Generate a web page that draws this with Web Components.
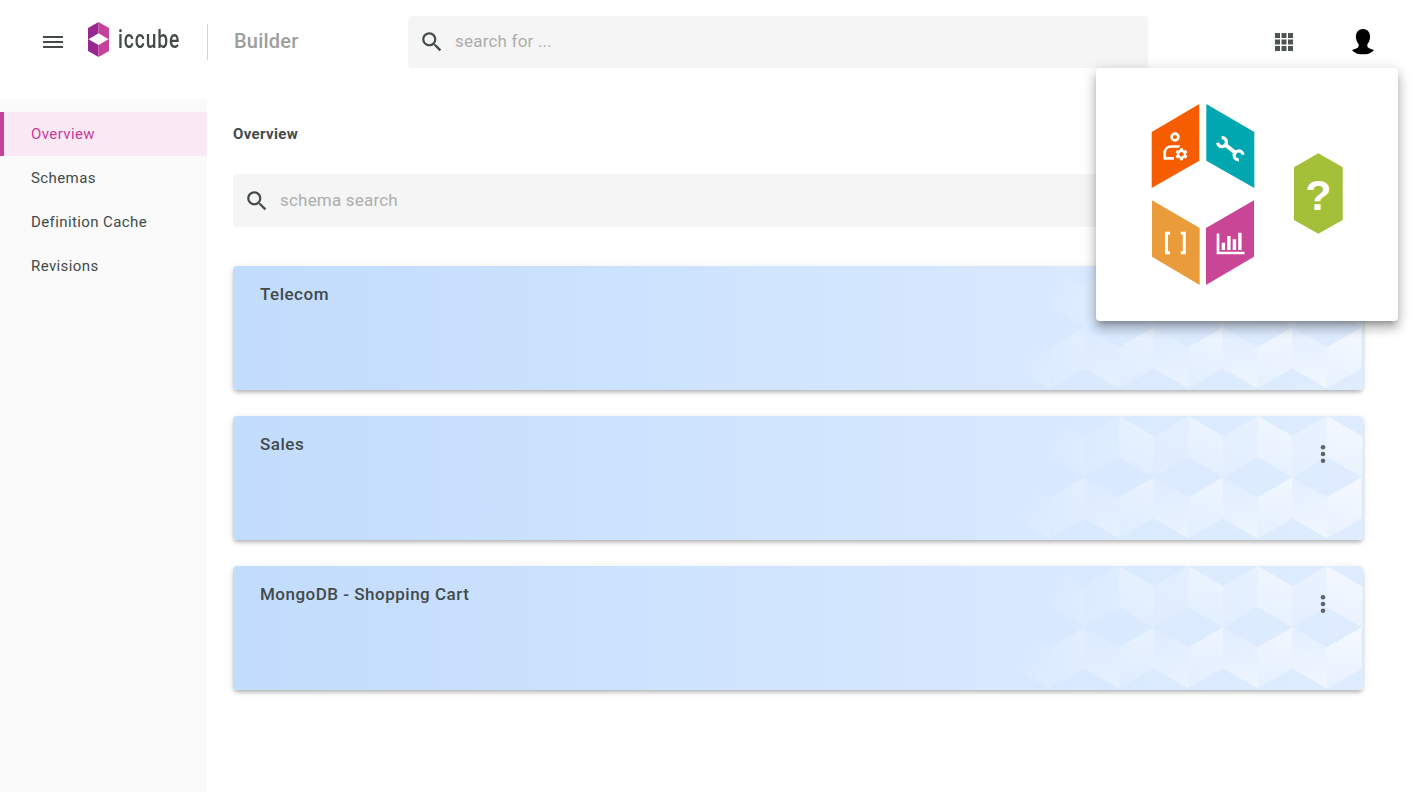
<!DOCTYPE html>
<html lang="en">
<head>
<meta charset="utf-8">
<title>icCube Builder</title>
<style>
    html, body { margin: 0; height: 100%; background: #fff; font-family: Roboto, sans-serif; overflow: hidden; }
</style>
</head>
<body>
<ic-app>
    <ic-header slot="header"></ic-header>
    <ic-sidebar slot="sidebar">
        <ic-nav-item active>Overview</ic-nav-item>
        <ic-nav-item>Schemas</ic-nav-item>
        <ic-nav-item>Definition Cache</ic-nav-item>
        <ic-nav-item>Revisions</ic-nav-item>
    </ic-sidebar>
    <ic-schema-card>Telecom</ic-schema-card>
    <ic-schema-card>Sales</ic-schema-card>
    <ic-schema-card>MongoDB - Shopping Cart</ic-schema-card>
    <ic-apps-menu slot="menu"></ic-apps-menu>
</ic-app>

<script>
const SEARCH_ICON = `<svg width="26" height="26" viewBox="0 0 24 24" fill="#424a4a"><path d="M15.5 14h-.79l-.28-.27C15.41 12.59 16 11.11 16 9.5 16 5.91 13.09 3 9.5 3S3 5.91 3 9.5 5.91 16 9.5 16c1.61 0 3.09-.59 4.23-1.57l.27.28v.79l5 4.99L20.49 19l-4.99-5zm-6 0C7.01 14 5 11.99 5 9.5S7.01 5 9.5 5 14 7.01 14 9.5 11.99 14 9.5 14z"/></svg>`

const GEAR = "M19.14 12.94c.04-.3.06-.61.06-.94 0-.32-.02-.64-.07-.94l2.03-1.58c.18-.14.23-.41.12-.61l-1.92-3.32c-.12-.22-.37-.29-.59-.22l-2.39.96c-.5-.38-1.03-.7-1.62-.94l-.36-2.54c-.04-.24-.24-.41-.48-.41h-3.84c-.24 0-.43.17-.47.41l-.36 2.54c-.59.24-1.13.57-1.62.94l-2.39-.96c-.22-.08-.47 0-.59.22L2.74 8.87c-.12.21-.08.47.12.61l2.03 1.58c-.05.3-.09.63-.09.94s.02.64.07.94l-2.03 1.58c-.18.14-.23.41-.12.61l1.92 3.32c.12.22.37.29.59.22l2.39-.96c.5.38 1.03.7 1.62.94l.36 2.54c.05.24.24.41.48.41h3.84c.24 0 .44-.17.47-.41l.36-2.54c.59-.24 1.13-.56 1.62-.94l2.39.96c.22.08.47 0 .59-.22l1.92-3.32c.12-.22.07-.47-.12-.61l-2.01-1.58zM12 15.6c-1.98 0-3.6-1.62-3.6-3.6s1.62-3.6 3.6-3.6 3.6 1.62 3.6 3.6-1.62 3.6-3.6 3.6z"

class IcApp extends HTMLElement {
    constructor() {
        super()
        this.attachShadow({mode: "open"}).innerHTML = `
            <style>
            :host { display: block; position: relative; width: 1413px; height: 792px; overflow: hidden; }
            .body { display: flex; height: 693px; margin-top: 15px; }
            main { flex: 1; padding: 0 50px 0 26px; min-width: 0; }
            h1 { margin: 0 0 5px; height: 70px; display: flex; align-items: center; font-size: 15px; font-weight: 700; letter-spacing: .35px; color: #424a4a; }
            .cards { display: flex; flex-direction: column; gap: 26px; margin-top: 39px; }
            </style>
            <slot name="header"></slot>
            <div class="body">
                <slot name="sidebar"></slot>
                <main>
                    <h1>Overview</h1>
                    <ic-search-field placeholder="schema search" height="53"></ic-search-field>
                    <div class="cards"><slot></slot></div>
                </main>
            </div>
            <slot name="menu"></slot>
        `
    }
}

class IcSearchField extends HTMLElement {
    constructor() {
        super()
        const height = this.getAttribute('height') || 52
        this.attachShadow({mode: "open"}).innerHTML = `
            <style>
            :host { display: flex; align-items: center; box-sizing: border-box; height: ${height}px; padding-left: 11px; gap: 10px; background: #f5f5f5; border-radius: 4px; }
            svg { flex: none; }
            span { font-size: 17px; letter-spacing: .2px; color: #adadad; padding-bottom: var(--text-lift, 1px); }
            </style>
            ${SEARCH_ICON}<span>${this.getAttribute('placeholder')}</span>
        `
    }
}

class IcHeader extends HTMLElement {
    constructor() {
        super()
        this.attachShadow({mode: "open"}).innerHTML = `
            <style>
            :host { display: flex; align-items: center; box-sizing: border-box; height: 84px; padding-left: 41px; }
            .burger { flex: none; width: 24px; height: 24px; margin-right: 23px; }
            .logo { flex: none; margin: 0 9px 5px 0; }
            .word { flex: none; width: 89px; margin-bottom: 6px; font-size: 26px; font-weight: 500; letter-spacing: 1.2px; color: #424a4a; transform: scaleX(.74); transform-origin: 0 50%; }
            .divider { flex: none; width: 1px; height: 36px; background: #d4d4d4; margin-right: 26px; }
            .title { flex: none; width: 174px; padding-bottom: 2px; font-size: 20px; font-weight: 500; color: #9e9e9e; letter-spacing: .2px; }
            ic-search-field { flex: none; width: 740px; --text-lift: 3px; }
            .grid { flex: none; margin-left: 127px; }
            .user { flex: none; margin-left: 59px; }
            </style>
            <svg class="burger" viewBox="0 0 24 24" fill="#424a4a"><path d="M2 18h20v-2H2v2zm0-5h20v-2H2v2zm0-7v2h20V6H2z"/></svg>
            <svg class="logo" width="21" height="35" viewBox="0 0 21 35">
                <path fill="#96288f" d="M10.500 0 0 6v23l10.500 6z"/>
                <path fill="#c7409a" d="M10.500 0 21 6v23l-10.500 6z"/>
                <path fill="#fff" d="M.5 17.200 10.500 11.300l10 5.900-10 5.800z"/>
            </svg>
            <span class="word">iccube</span>
            <span class="divider"></span>
            <span class="title">Builder</span>
            <ic-search-field placeholder="search for ..." height="52"></ic-search-field>
            <svg class="grid" width="18" height="18" viewBox="0 0 18 18" fill="#4c5353"><path d="M0 0h5v5H0zM6.500 0h5v5h-5zM13 0h5v5h-5zM0 6.500h5v5H0zM6.500 6.500h5v5h-5zM13 6.500h5v5h-5zM0 13h5v5H0zM6.500 13h5v5h-5zM13 13h5v5h-5z"/></svg>
            <svg class="user" width="22" height="26" viewBox="0 0 22 26"><path d="M11 0c4.100 0 7.100 3.100 7.100 7.600 0 3.100-1.100 5.900-2.600 7.500-.4 1.200-.3 2.400.5 3.300 1.500 1.300 4.200 1.700 6 2.700-.8 1.300-1.900 2-3.300 2.600-1.700.9-3.700 1.600-7.700 1.600s-6-.7-7.700-1.600C1.900 23.100.8 22.400 0 21.100c1.800-1 4.500-1.400 6-2.700.8-.9.900-2.100.5-3.300C5 13.500 3.900 10.700 3.900 7.600 3.900 3.100 6.900 0 11 0z"/></svg>
        `
    }
}

class IcSidebar extends HTMLElement {
    constructor() {
        super()
        this.attachShadow({mode: "open"}).innerHTML = `
            <style>
            :host { display: flex; flex-direction: column; flex: none; box-sizing: border-box; width: 207px; padding-top: 13px; background: #fafafa; }
            </style>
            <slot></slot>
        `
    }
}

class IcNavItem extends HTMLElement {
    constructor() {
        super()
        this.attachShadow({mode: "open"}).innerHTML = `
            <style>
            :host { display: flex; align-items: center; box-sizing: border-box; height: 44px; padding-left: 31px; font-size: 15px; letter-spacing: .4px; color: #424a4a; }
            :host([active]) { padding-left: 27px; border-left: 4px solid #c7409a; background: #f8e9f4; color: #cb3a97; }
            </style>
            <slot></slot>
        `
    }
}

// isometric cube faces behind the card, coordinates are page x, card y
function cubePattern() {
    const w = 34.67, h = 20, e = 41.3, row = 61.3
    let faces = ''
    const poly = (pts, fill) => `<polygon points="${pts.map(p => p.map(n => n.toFixed(1)).join(',')).join(' ')}" fill="${fill}"/>`
    for (let k = -3; k < 4; k++) {
        const a = 1153.7 + k * 69.33
        const b = a - w
        faces += poly([[a - w, 0], [a, h], [a, row], [a - w, e]], 'url(#aLeft)')
        faces += poly([[a, h], [a + w, 0], [a + w, e], [a, row]], 'url(#aRight)')
        faces += poly([[b - w, row], [b, row + h], [b, row + h + e], [b - w, row + e]], 'url(#bLeft)')
        faces += poly([[b, row + h], [b + w, row], [b + w, row + e], [b, row + h + e]], 'url(#bRight)')
    }
    const grad = (id, top, bottom) => `<linearGradient id="${id}" x1="0" y1="0" x2="0" y2="1"><stop offset="0" stop-color="#fff" stop-opacity="${top}"/><stop offset="1" stop-color="#fff" stop-opacity="${bottom}"/></linearGradient>`
    return `<svg class="cubes" width="1131" height="124" viewBox="233 0 1131 124">
        <defs>
            ${grad('aLeft', .75, .35)}${grad('aRight', .42, .25)}${grad('bLeft', .22, .62)}${grad('bRight', .72, .3)}
            <linearGradient id="fade" gradientUnits="userSpaceOnUse" x1="1025" y1="62" x2="1300" y2="209">
                <stop offset="0" stop-color="#fff" stop-opacity="0"/><stop offset=".2" stop-color="#fff" stop-opacity=".45"/><stop offset="1" stop-color="#fff" stop-opacity="1"/>
            </linearGradient>
            <mask id="fadeMask" maskUnits="userSpaceOnUse" x="233" y="0" width="1131" height="124"><rect x="233" y="0" width="1131" height="124" fill="url(#fade)"/></mask>
        </defs>
        <g mask="url(#fadeMask)">${faces}</g>
    </svg>`
}

class IcSchemaCard extends HTMLElement {
    constructor() {
        super()
        this.attachShadow({mode: "open"}).innerHTML = `
            <style>
            :host { display: flex; justify-content: space-between; align-items: flex-start; position: relative; box-sizing: border-box; height: 124px; padding: 18px 28px 0 27px; border-radius: 4px; overflow: hidden; font-size: 17px; font-weight: 500; letter-spacing: .5px; color: #424a4a; background: linear-gradient(90deg, #c2dcfd 0%, #d8e9ff 72%, #dfecff 100%); box-shadow: 0 3px 4px -1px rgba(0,0,0,.28), 0 1px 8px rgba(0,0,0,.08); }
            .cubes { position: absolute; left: 0; top: 0; }
            .title, .more { position: relative; }
            .more { flex: none; margin-top: 7.500px; }
            </style>
            ${cubePattern()}
            <div class="title"><slot></slot></div>
            <svg class="more" width="24" height="24" viewBox="0 0 24 24" fill="#616469"><circle cx="12" cy="5.300" r="2.300"/><circle cx="12" cy="12" r="2.300"/><circle cx="12" cy="18.700" r="2.300"/></svg>
        `
    }
}

class IcAppsMenu extends HTMLElement {
    constructor() {
        super()
        this.attachShadow({mode: "open"}).innerHTML = `
            <style>
            :host { display: block; position: absolute; left: 1096px; top: 68px; width: 302px; height: 253px; background: #fff; border-radius: 4px; box-shadow: 0 5px 5px -3px rgba(0,0,0,.25), 0 8px 10px 1px rgba(0,0,0,.16), 0 3px 14px 2px rgba(0,0,0,.14); }
            svg { display: block; }
            </style>
            <svg width="302" height="253" viewBox="1096 68 302 253">
                <!-- admin -->
                <polygon fill="#f55d00" points="1199.3,104 1199.3,160.700 1151.700,188 1151.700,132"/>
                <g fill="none" stroke="#fff" stroke-width="2.700">
                    <circle cx="1175" cy="137" r="3.400"/>
                    <path d="M1164.700 159v-6c0-4 3-6.500 7-6.500h8M1164 158.400h10"/>
                </g>
                <circle cx="1181.500" cy="154.200" r="7.200" fill="#f55d00"/>
                <path fill="#fff" transform="translate(1173.940 146.640) scale(.63)" d="${GEAR}"/>
                <!-- tools -->
                <polygon fill="#00a6b0" points="1206.300,104 1254.300,132 1254.300,188 1206.300,160.700"/>
                <g transform="translate(1230.300 148.800) rotate(38.700)" fill="none" stroke="#fff">
                    <path stroke-width="4" d="M-8 0H8"/>
                    <path stroke-width="3.200" d="M13.700-3.300A4.500 4.500 0 1 0 13.700 3.300M-13.700-3.300A4.500 4.500 0 1 1-13.700 3.300"/>
                </g>
                <!-- schema -->
                <polygon fill="#ea9c3a" points="1152,200.300 1199.700,228 1199.700,285 1152,256.700"/>
                <path fill="none" stroke="#fff" stroke-width="3" d="M1170 233.200h-3.500v19.600h3.500M1180.800 233.200h3.500v19.600h-3.500"/>
                <!-- dashboards -->
                <polygon fill="#c94697" points="1254,200.300 1254,256.700 1206,285 1206,228"/>
                <path fill="none" stroke="#fff" stroke-width="2.700" d="M1218 233.500v19.500h26.500"/>
                <path fill="#fff" d="M1221.700 242.700h3.400V250h-3.400zM1227.200 236h3.400v14h-3.400zM1232.700 239.300h3.400V250h-3.400zM1238.200 232.700h3.400V250h-3.400z"/>
                <!-- help -->
                <polygon fill="#a4bf38" points="1318.300,153.300 1342.700,167.300 1342.700,220 1318.300,233.700 1294,220 1294,167.300"/>
                <text x="1318.300" y="210" text-anchor="middle" font-family="'Liberation Sans', sans-serif" font-size="43" font-weight="700" fill="#fff">?</text>
            </svg>
        `
    }
}

customElements.define('ic-search-field', IcSearchField)
customElements.define('ic-header', IcHeader)
customElements.define('ic-sidebar', IcSidebar)
customElements.define('ic-nav-item', IcNavItem)
customElements.define('ic-schema-card', IcSchemaCard)
customElements.define('ic-apps-menu', IcAppsMenu)
customElements.define('ic-app', IcApp)
</script>
</body>
</html>
